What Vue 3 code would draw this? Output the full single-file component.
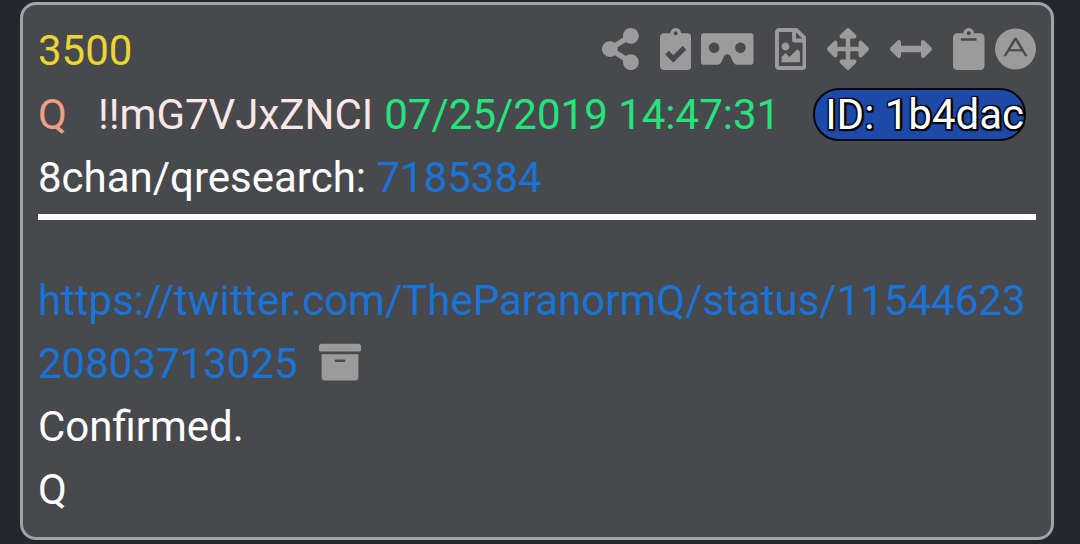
<script setup>
const clipboardBody =
  'M336 64h-80c0-35.3-28.7-64-64-64s-64 28.7-64 64H48C21.5 64 0 85.5 0 112v352c0 26.5 21.5 48 48 48h288c26.5 0 48-21.5 48-48V112c0-26.5-21.5-48-48-48zM192 40c13.3 0 24 10.7 24 24s-10.7 24-24 24-24-10.7-24-24 10.7-24 24-24z'

const groups = [
  [
    {
      name: 'Share',
      width: 448,
      path: 'M352 320c-22.608 0-43.387 7.819-59.79 20.895l-102.486-64.054a96.551 96.551 0 0 0 0-41.683l102.486-64.054C308.613 184.181 329.392 192 352 192c53.019 0 96-42.981 96-96S405.019 0 352 0s-96 42.981-96 96c0 7.158.79 14.13 2.276 20.841L155.79 180.895C139.387 167.819 118.608 160 96 160c-53.019 0-96 42.981-96 96s42.981 96 96 96c22.608 0 43.387-7.819 59.79-20.895l102.486 64.054A96.301 96.301 0 0 0 256 416c0 53.019 42.981 96 96 96s96-42.981 96-96-42.981-96-96-96z',
    },
  ],
  [
    {
      name: 'Select post',
      width: 384,
      path:
        clipboardBody +
        'M313.2 271.8l-143 141.8c-4.7 4.7-12.3 4.6-17-.1l-82.6-83.3c-4.7-4.7-4.6-12.3.1-17L99.1 285c4.7-4.7 12.3-4.6 17 .1l46 46.4 106-105.2c4.7-4.7 12.3-4.6 17 .1l28.2 28.4c4.7 4.8 4.6 12.3-.1 17z',
    },
    {
      name: 'Viewer',
      width: 640,
      path: 'M608 64H32C14.33 64 0 78.33 0 96v320c0 17.67 14.33 32 32 32h160.22c25.19 0 48.03-14.77 58.36-37.74l27.74-61.64C286.21 331.08 302.35 320 320 320s33.79 11.08 41.68 28.62l27.74 61.64C399.75 433.23 422.6 448 447.78 448H608c17.67 0 32-14.33 32-32V96c0-17.67-14.33-32-32-32zM160 304c-35.35 0-64-28.65-64-64s28.65-64 64-64 64 28.65 64 64-28.65 64-64 64zm320 0c-35.35 0-64-28.65-64-64s28.65-64 64-64 64 28.65 64 64-28.65 64-64 64z',
    },
  ],
  [
    {
      name: 'Save image',
      width: 384,
      path: 'M369.9 97.9L286 14C277 5 264.8-.1 252.1-.1H48C21.5 0 0 21.5 0 48v416c0 26.5 21.5 48 48 48h288c26.5 0 48-21.5 48-48V131.9c0-12.7-5.1-25-14.1-34zM332.1 128H256V51.9l76.1 76.1zM48 464V48h160v104c0 13.3 10.7 24 24 24h104v288H48zm32-48h224V288l-23.5-23.5c-4.7-4.7-12.3-4.7-17 0L176 352l-39.5-39.5c-4.7-4.7-12.3-4.7-17 0L80 352v64zm48-240c-26.5 0-48 21.5-48 48s21.5 48 48 48 48-21.5 48-48-21.5-48-48-48z',
    },
  ],
  [
    {
      name: 'Move',
      width: 512,
      path: 'M352.201 425.775l-79.196 79.196c-9.373 9.373-24.568 9.373-33.941 0l-79.196-79.196c-15.119-15.119-4.411-40.971 16.971-40.97h51.162L228 284H127.196v51.162c0 21.382-25.851 32.09-40.971 16.971L7.029 272.937c-9.373-9.373-9.373-24.569 0-33.941L86.225 159.8c15.119-15.119 40.971-4.411 40.971 16.971V228H228V127.196h-51.23c-21.382 0-32.09-25.851-16.971-40.971l79.196-79.196c9.373-9.373 24.568-9.373 33.941 0l79.196 79.196c15.119 15.119 4.411 40.971-16.971 40.971h-51.162V228h100.804v-51.162c0-21.382 25.851-32.09 40.97-16.971l79.196 79.196c9.373 9.373 9.373 24.569 0 33.941L425.773 352.2c-15.119 15.119-40.971 4.411-40.97-16.971V284H284v100.804h51.23c21.382 0 32.09 25.851 16.971 40.971z',
    },
  ],
  [
    {
      name: 'Widen',
      width: 512,
      path: 'M377.941 169.941V216H134.059v-46.059c0-21.382-25.851-32.09-40.971-16.971L7.029 239.029c-9.373 9.373-9.373 24.568 0 33.941l86.059 86.059c15.119 15.119 40.971 4.411 40.971-16.971V296h243.882v46.059c0 21.382 25.851 32.09 40.971 16.971l86.059-86.059c9.373-9.373 9.373-24.568 0-33.941l-86.059-86.059c-15.119-15.12-40.971-4.412-40.971 16.97z',
    },
  ],
  [
    {
      name: 'Copy',
      width: 384,
      path: clipboardBody + 'M102 124c-3 0-6 3-6 6v20c0 3 3 6 6 6h180c3 0 6-3 6-6v-20c0-3-3-6-6-6z',
    },
    {
      name: 'Anchor',
      width: 500,
      path: 'M250 6a250 250 0 1 0 0 500a250 250 0 1 0 0-500zM237 120h26L398 344h-32L328 284H172L134 344h-32zM250 156L188 258H312z',
    },
  ],
]
</script>

<template>
  <main class="page">
    <article class="post">
      <header class="top">
        <span class="number">3500</span>
        <nav class="tools" aria-label="Post tools">
          <div v-for="(group, i) in groups" :key="i" class="group">
            <button v-for="icon in group" :key="icon.name" type="button" :aria-label="icon.name">
              <svg class="icon" :viewBox="`0 0 ${icon.width} 512`" aria-hidden="true">
                <path :d="icon.path" fill-rule="evenodd" />
              </svg>
            </button>
          </div>
        </nav>
      </header>
      <div class="author">
        <span class="name">Q</span>
        <span class="trip">!!mG7VJxZNCI</span>
        <time class="date" datetime="2019-07-25T14:47:31">07/25/2019 14:47:31</time>
        <span class="badge">ID: 1b4dac</span>
      </div>
      <div>8chan/qresearch: <a href="#7185384">7185384</a></div>
      <hr />
      <div class="body">
        <a href="https://twitter.com/TheParanormQ/status/1154462320803713025">https://twitter.com/TheParanormQ/status/1154462320803713025</a>
        <button class="archive" type="button" aria-label="Archive">
          <svg class="icon" viewBox="0 0 512 512" aria-hidden="true">
            <path
              fill-rule="evenodd"
              d="M32 448c0 17.7 14.3 32 32 32h384c17.7 0 32-14.3 32-32V160H32v288zm160-212c0-6.6 5.4-12 12-12h104c6.6 0 12 5.4 12 12v8c0 6.6-5.4 12-12 12H204c-6.6 0-12-5.4-12-12v-8zM480 32H32C14.3 32 0 46.3 0 64v48c0 8.8 7.2 16 16 16h480c8.8 0 16-7.2 16-16V64c0-17.7-14.3-32-32-32z"
            />
          </svg>
        </button>
        <div>Confirmed.</div>
        <div>Q</div>
      </div>
    </article>
  </main>
</template>

<style>
body {
  background: #25272f;
}
</style>

<style scoped>
.page {
  padding: 2px 26px 4px 20px;
  font: 42px/63px Roboto, sans-serif;
  color: #fff;
}
.post {
  padding: 14px 15px 16px;
  border: 3px solid #a2a3a7;
  border-radius: 16px;
  background: #48494d;
}
.top {
  display: flex;
  align-items: flex-start;
  justify-content: space-between;
  padding-bottom: 1px;
}
.number {
  color: #ebd534;
}
.tools {
  display: flex;
  gap: 21px;
  padding-top: 9px;
}
.group {
  display: flex;
  gap: 10px;
}
button {
  display: inline-flex;
  padding: 0;
  border: 0;
  background: none;
  color: #9b9b9b;
  cursor: pointer;
}
.icon {
  display: block;
  height: 42px;
  fill: currentColor;
}
.author {
  display: flex;
  align-items: center;
  white-space: nowrap;
}
.name {
  margin-right: 31px;
  color: #eea083;
}
.trip {
  margin-right: 11px;
  color: #fde6e6;
}
.date {
  margin-right: 33px;
  color: #24e47c;
}
.badge {
  padding-left: 10px;
  border: 2px solid #05070f;
  border-radius: 26px;
  background: #1d4aa8;
  line-height: 49px;
  text-shadow: 2px 2px 1px #000, -1px -1px 1px #000, 2px -1px 1px #000, -1px 2px 1px #000;
}
a {
  color: #1a73d6;
  text-decoration: none;
}
hr {
  height: 6px;
  margin: 5px 0 49px;
  border: 0;
  background: #fff;
}
.body {
  overflow-wrap: anywhere;
}
.body a {
  word-break: break-all;
}
.archive {
  margin-left: 21px;
  vertical-align: -5px;
}
</style>
